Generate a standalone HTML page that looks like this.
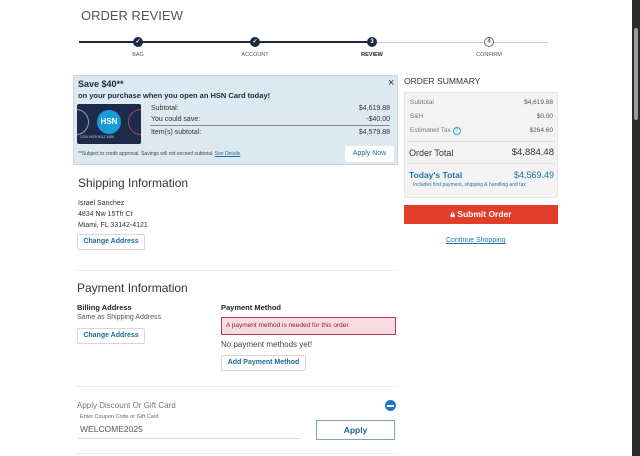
<!DOCTYPE html>
<html><head><meta charset="utf-8"><style>
*{margin:0;padding:0;box-sizing:border-box}
body{width:640px;height:456px;overflow:hidden;background:#fff;font-family:"Liberation Sans",sans-serif;color:#333;position:relative}
.a{position:absolute;white-space:nowrap}
.btn{position:absolute;border:1px solid #d6d6d6;border-radius:2px;background:#fff;color:#1a6a9a;font-size:7px;font-weight:bold;text-align:center}
.circ{position:absolute;width:10px;height:10px;border-radius:50%;background:#1b2a40;color:#fff;font-size:6px;text-align:center;line-height:10px;font-weight:bold}
.lbl{position:absolute;font-size:5.5px;color:#555;top:52px;transform:translateX(-50%)}
.hr{position:absolute;left:75px;width:324px;height:1px;background:#eee}
</style></head><body>
<div class="a" style="left:81px;top:8px;font-size:13px;color:#555">ORDER REVIEW</div>
<div class="a" style="left:79px;top:41px;width:293px;height:2px;background:#1b2a40"></div>
<div class="a" style="left:372px;top:42px;width:176px;height:1px;background:#ccc"></div>
<div class="circ" style="left:133px;top:37px">✓</div>
<div class="circ" style="left:250px;top:37px">✓</div>
<div class="circ" style="left:367px;top:37px">3</div>
<div class="circ" style="left:484px;top:37px;background:#fff;border:1px solid #666;color:#666;line-height:8px">4</div>
<div class="lbl" style="left:138px">BAG</div>
<div class="lbl" style="left:255px">ACCOUNT</div>
<div class="lbl" style="left:372px;color:#222;font-weight:bold">REVIEW</div>
<div class="lbl" style="left:489px">CONFIRM</div>

<div class="a" style="left:73px;top:75px;width:325px;height:90px;background:#dce9f0;border:1px solid #c9d6de"></div>
<div class="a" style="left:78px;top:79px;font-size:9px;font-weight:bold;color:#1b2a40">Save $40**</div>
<div class="a" style="left:78px;top:91px;font-size:7.5px;font-weight:bold;color:#1b2a40">on your purchase when you open an HSN Card today!</div>
<div class="a" style="left:388px;top:77px;font-size:11px;color:#333">×</div>
<div class="a" style="left:77px;top:104px;width:64px;height:40px;background:#1c2b4a;border-radius:2px;overflow:hidden">
<div class="a" style="left:20px;top:6px;width:24px;height:24px;border-radius:50%;background:#1a9ad6;color:#fff;font-size:8px;font-weight:bold;text-align:center;line-height:24px">HSN</div>
<div class="a" style="left:-14px;top:5px;width:26px;height:26px;border-radius:50%;border:1px solid #8aa"></div>
<div class="a" style="left:51px;top:5px;width:26px;height:26px;border-radius:50%;border:1px solid #a46"></div>
<div class="a" style="left:3px;top:31px;font-size:3.5px;color:#ccd">1234 5678 9012 3456</div>
</div>
<div class="a" style="left:151px;top:105px;font-size:7px">Subtotal:</div>
<div class="a" style="left:151px;top:116px;font-size:7px">You could save:</div>
<div class="a" style="left:151px;top:129px;font-size:7px">Item(s) subtotal:</div>
<div class="a" style="right:250px;top:105px;font-size:7px">$4,619.88</div>
<div class="a" style="right:250px;top:116px;font-size:7px">-$40.00</div>
<div class="a" style="right:250px;top:129px;font-size:7px">$4,579.88</div>
<div class="a" style="left:150px;top:125px;width:240px;height:1px;background:#889"></div>
<div class="a" style="left:78px;top:151px;font-size:5px;color:#444">**Subject to credit approval. Savings will not exceed subtotal. <span style="color:#1a6a9a;text-decoration:underline">See Details</span></div>
<div class="btn" style="left:345px;top:146px;width:49px;height:16px;line-height:14px;font-weight:normal;font-size:7px;border-color:#fff">Apply Now</div>

<div class="a" style="left:404px;top:76px;font-size:8.5px;color:#333">ORDER SUMMARY</div>
<div class="a" style="left:404px;top:92px;width:154px;height:106px;background:#f3f3f3;border:1px solid #e6e6e6"></div>
<div class="a" style="left:410px;top:99px;font-size:6.5px;color:#777">Subtotal</div>
<div class="a" style="left:410px;top:113px;font-size:6.5px;color:#777">S&amp;H</div>
<div class="a" style="left:410px;top:127px;font-size:6.5px;color:#777">Estimated Tax <span style="display:inline-block;width:8px;height:8px;border:1px solid #3a9ad9;border-radius:50%;color:#3a9ad9;font-size:5px;text-align:center;line-height:6px">?</span></div>
<div class="a" style="right:87px;top:99px;font-size:6.5px;color:#555">$4,619.88</div>
<div class="a" style="right:87px;top:113px;font-size:6.5px;color:#555">$0.00</div>
<div class="a" style="right:87px;top:127px;font-size:6.5px;color:#555">$264.60</div>
<div class="a" style="left:408px;top:141px;width:146px;height:1px;background:#ddd"></div>
<div class="a" style="left:409px;top:148px;font-size:9px;color:#333">Order Total</div>
<div class="a" style="right:86px;top:147px;font-size:9.5px;color:#333">$4,884.48</div>
<div class="a" style="left:408px;top:163px;width:146px;height:1px;background:#ddd"></div>
<div class="a" style="left:409px;top:170px;font-size:8.5px;font-weight:bold;color:#1f73a8">Today's Total</div>
<div class="a" style="right:86px;top:170px;font-size:9px;color:#1f73a8">$4,569.49</div>
<div class="a" style="left:413px;top:182px;font-size:5px;color:#1f73a8">Includes first payment, shipping &amp; handling and tax</div>
<div class="a" style="left:404px;top:205px;width:154px;height:19px;background:#e23c2b;color:#fff;font-size:8.5px;font-weight:bold;text-align:center;line-height:19px">🔒︎ Submit Order</div>
<div class="a" style="left:446px;top:237px;font-size:7px;color:#1f73a8;text-decoration:underline">Continue Shopping</div>

<div class="a" style="left:78px;top:176px;font-size:12px;color:#333">Shipping Information</div>
<div class="a" style="left:78px;top:198px;font-size:7px;line-height:11px">Israel Sanchez<br>4834 Nw 15Th Ct<br>Miami, FL 33142-4121</div>
<div class="btn" style="left:77px;top:234px;width:68px;height:16px;line-height:14px">Change Address</div>
<div class="hr" style="top:270px"></div>
<div class="a" style="left:77px;top:281px;font-size:12px;color:#333">Payment Information</div>
<div class="a" style="left:77px;top:303px;font-size:7.5px;font-weight:bold;color:#222">Billing Address</div>
<div class="a" style="left:77px;top:314px;font-size:7px;color:#555">Same as Shipping Address</div>
<div class="btn" style="left:77px;top:328px;width:68px;height:16px;line-height:14px">Change Address</div>
<div class="a" style="left:221px;top:303px;font-size:7.5px;font-weight:bold;color:#222">Payment Method</div>
<div class="a" style="left:221px;top:317px;width:175px;height:18px;background:#f7dde0;border:1px solid #b53a55;font-size:6.5px;color:#8a2035;padding-left:4px;line-height:16px">A payment method is needed for this order.</div>
<div class="a" style="left:221px;top:340px;font-size:8px;color:#444">No payment methods yet!</div>
<div class="btn" style="left:221px;top:355px;width:85px;height:16px;line-height:14px">Add Payment Method</div>
<div class="hr" style="top:386px"></div>
<div class="a" style="left:77px;top:401px;font-size:8px;color:#777">Apply Discount Or Gift Card</div>
<div class="a" style="left:385px;top:400px;width:11px;height:11px;border-radius:50%;background:#1f73c8"><div class="a" style="left:2px;top:4.5px;width:7px;height:2px;background:#fff"></div></div>
<div class="a" style="left:80px;top:414px;font-size:5.5px;color:#666">Enter Coupon Code or Gift Card</div>
<div class="a" style="left:80px;top:424px;font-size:8.5px;color:#555">WELCOME2025</div>
<div class="a" style="left:77px;top:438px;width:223px;height:1px;background:#ddd"></div>
<div class="a" style="left:316px;top:420px;width:79px;height:20px;border:1px solid #7aa0bd;color:#1f5f8f;font-size:8.5px;font-weight:bold;text-align:center;line-height:18px">Apply</div>
<div class="hr" style="top:453px"></div>

<div class="a" style="left:632px;top:0;width:8px;height:456px;background:#2b2b2b"></div>
<div class="a" style="left:634px;top:28px;width:4px;height:92px;background:#9a9a9a;border-radius:2px"></div>
</body></html>
